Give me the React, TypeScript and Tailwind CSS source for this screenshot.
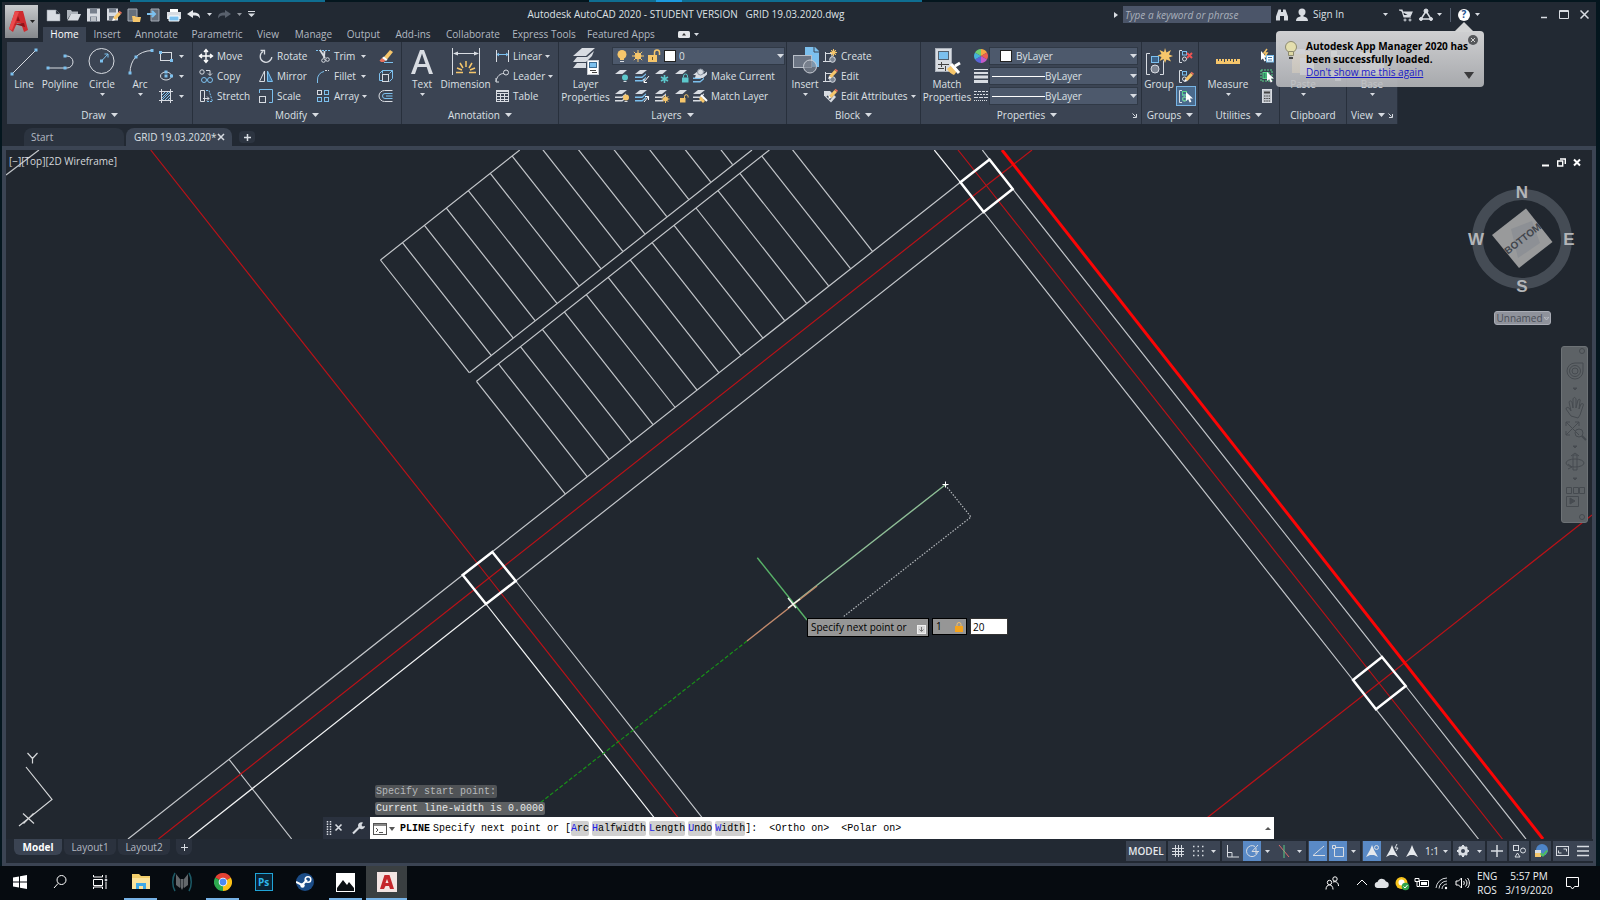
import { useState } from "react";
import type { ReactNode } from "react";

const BLUE = "#7cc0ee";
const GOLD = "#f6c66b";
const LIGHT = "#d8dce2";

/** svg wrapper, everything is drawn in px units */
function Icon({ w = 16, h = 16, children, className = "" }: { w?: number; h?: number; children: ReactNode; className?: string }) {
  return (
    <svg
      width={w}
      height={h}
      viewBox={`0 0 ${w} ${h}`}
      fill="none"
      stroke={LIGHT}
      strokeWidth={1}
      className={`shrink-0 ${className}`}
      aria-hidden="true"
    >
      {children}
    </svg>
  );
}

function Caret({ small = false }: { small?: boolean }) {
  return small ? (
    <Icon w={5} h={3}>
      <path d="M0 0h5L2.5 3z" fill={LIGHT} stroke="none" />
    </Icon>
  ) : (
    <Icon w={7} h={4}>
      <path d="M0 0h7L3.5 4z" fill={LIGHT} stroke="none" />
    </Icon>
  );
}

function Dot({ x, y }: { x: number; y: number }) {
  return <rect x={x - 1.5} y={y - 1.5} width={3} height={3} fill={BLUE} stroke="none" />;
}

/* ---------- shared icon parts ---------- */

const Pencil = () => (
  <g stroke="none">
    <path d="M7 11l5.500-6 2.500 2-5.500 6z" fill={GOLD} />
    <path d="M12.500 5l1-1.200 2.500 2-1 1.200z" fill="#e8705c" />
    <path d="M7 11l-.8 3 3.300-1z" fill="#fff" />
  </g>
);

const Sheets = ({ blue = false }: { blue?: boolean }) => (
  <g stroke="none">
    <path d="M6 2h7l-5 4H1z" fill={LIGHT} />
    <path d="M1 8.500h7l4-3.200v1.500L8.300 10H1z" fill={blue ? BLUE : LIGHT} />
    <path d="M1 12h7l4-3.200v1.500L8.300 13.500H1z" fill={blue ? BLUE : LIGHT} />
  </g>
);

const SmallSheet = () => <path d="M6 2h7l-4.500 4H1z" fill={LIGHT} stroke="none" />;

const Pointer = () => <path d="M8 4v9l2.200-1.800 1.500 3.300 1.700-.8-1.500-3.200H15z" fill="#fff" stroke="none" />;

const Sun = ({ x, y, r = 5 }: { x: number; y: number; r?: number }) => (
  <g stroke={GOLD}>
    <circle cx={x} cy={y} r={r * 0.5} fill={GOLD} />
    <path
      d={`M${x} ${y - r}v${r * 2}M${x - r} ${y}h${r * 2}M${x - r * 0.7} ${y - r * 0.7}l${r * 1.4} ${r * 1.4}M${x + r * 0.7} ${y - r * 0.7}l${-r * 1.4} ${r * 1.4}`}
    />
  </g>
);

/* ---------- ribbon tool pieces ---------- */

function BigTool({ label, w, icon, caret = true }: { label: string; w: string; icon: ReactNode; caret?: boolean }) {
  return (
    <button type="button" className={`${w} flex h-[60px] shrink-0 flex-col items-center`}>
      <Icon w={32} h={32}>
        {icon}
      </Icon>
      <span className="leading-[13px] whitespace-pre">{label}</span>
      {caret && (
        <span className="mt-0.5">
          <Caret small />
        </span>
      )}
    </button>
  );
}

function Tool({ label, icon, w = "", caret = false }: { label: string; icon: ReactNode; w?: string; caret?: boolean }) {
  return (
    <button type="button" className={`${w} flex h-5 shrink-0 items-center gap-[3px] whitespace-nowrap`}>
      <Icon>{icon}</Icon>
      <span className="flex-1 text-left">{label}</span>
      {caret && (
        <span className="pr-3">
          <Caret small />
        </span>
      )}
    </button>
  );
}

function IconTool({ label, icon, caret = false, active = false }: { label: string; icon: ReactNode; caret?: boolean; active?: boolean }) {
  return (
    <button
      type="button"
      aria-label={label}
      className={`flex h-5 min-w-5 items-center justify-center gap-[5px] ${active ? "border border-[#76b4e4] bg-[#4a6a8c]" : ""}`}
    >
      <Icon>{icon}</Icon>
      {caret && <Caret small />}
    </button>
  );
}

function Panel({ title, w, caret = true, launcher = false, children }: { title: string; w: string; caret?: boolean; launcher?: boolean; children: ReactNode }) {
  return (
    <section className={`${w} flex shrink-0 flex-col border-r border-[#28303c] bg-[#3b4453] pt-1`}>
      <div className="flex h-[60px]">{children}</div>
      <div className={`relative flex h-[18px] items-center justify-center gap-[5px] ${launcher ? "pr-2" : ""}`}>
        {title}
        {caret && <Caret />}
        {launcher && (
          <Icon w={5} h={5} className="absolute right-1">
            <path d="M.5.500l3 3M4.500 1v3.500H1" />
          </Icon>
        )}
      </div>
    </section>
  );
}

const SELECT = "min-w-0 flex-1 appearance-none bg-transparent outline-none";
const FIELD = "flex h-[18px] items-center border border-[#303946] bg-[#4d596c]";

function PropertySelect({ name, options, swatch = false }: { name: string; options: string[]; swatch?: boolean }) {
  return (
    <div className={`${FIELD} w-[149px]`}>
      {swatch ? (
        <span className="mr-1 ml-[10px] size-3 border border-[#222] bg-white" />
      ) : (
        <span className="ml-0.5 h-px w-[53px] bg-white" />
      )}
      <select aria-label={name} className={SELECT}>
        {options.map((o) => (
          <option key={o}>{o}</option>
        ))}
      </select>
      <Caret />
    </div>
  );
}

/* ---------- ribbon ---------- */

const TABS = [
  { name: "Home", w: "w-[43px]" },
  { name: "Insert", w: "w-[42px]" },
  { name: "Annotate", w: "w-[57px]" },
  { name: "Parametric", w: "w-16" },
  { name: "View", w: "w-[38px]" },
  { name: "Manage", w: "w-[53px]" },
  { name: "Output", w: "w-[47px]" },
  { name: "Add-ins", w: "w-[52px]" },
  { name: "Collaborate", w: "w-[68px]" },
  { name: "Express Tools", w: "w-[74px]" },
  { name: "Featured Apps", w: "w-20" },
];

function DrawPanel() {
  return (
    <Panel title="Draw" w="w-[186px]">
      <span className="w-[3px]" />
      <BigTool label="Line" w="w-7" caret={false} icon={<><path d="M4 28L28 4" /><Dot x={4} y={28} /><Dot x={28} y={4} /></>} />
      <BigTool
        label="Polyline"
        w="w-11"
        caret={false}
        icon={<><path d="M4 22h19a6 6 0 0 0 0-12h-2" /><Dot x={4} y={22} /><Dot x={21} y={22} /><Dot x={21} y={10} /></>}
      />
      <BigTool
        label="Circle"
        w="w-10"
        icon={<><circle cx={15.5} cy={15} r={12.5} /><path d="M15.500 15L22 8M18.500 8H22v3.500" stroke={BLUE} /><Dot x={15.5} y={15} /></>}
      />
      <BigTool
        label="Arc"
        w="w-9"
        icon={<><path d="M6 27C6 14 14 5 28 4.500" /><Dot x={6} y={27} /><Dot x={12} y={11} /><Dot x={28} y={4.5} /></>}
      />
      <div>
        <IconTool label="Rectangle" caret icon={<><rect x={2.5} y={4.5} width={11} height={8} /><Dot x={2.5} y={4.5} /><Dot x={13.5} y={12.5} /></>} />
        <IconTool label="Ellipse" caret icon={<><ellipse cx={8} cy={8} rx={5.5} ry={4} /><Dot x={8} y={8} /><Dot x={13.5} y={8} /><Dot x={8} y={4} /></>} />
        <IconTool
          label="Hatch"
          caret
          icon={
            <>
              <path d="M3.500 1v14M12.500 1v14M1 3.500h14M1 12.500h14" />
              <path d="M4 7l3-3M4 10l6-6M4 12l8-8M7 12l5-5M10 12l2-2" stroke={BLUE} />
            </>
          }
        />
      </div>
    </Panel>
  );
}

function ModifyPanel() {
  return (
    <Panel title="Modify" w="w-[209px]">
      <div className="ml-[5px] w-[60px] shrink-0">
        <Tool label="Move" icon={<path d="M8 2v12M2 8h12M6 4l2-2.500L10 4M6 12l2 2.500 2-2.500M4 6L1.500 8 4 10M12 6l2.500 2L12 10" strokeWidth={1.4} stroke="#fff" />} />
        <Tool
          label="Copy"
          icon={<><circle cx={4} cy={4} r={2.2} /><path d="M8 2.500h4V7M10 5.500l2 2 2-2" /><g stroke={BLUE}><circle cx={6} cy={12} r={2.5} /><circle cx={12} cy={12} r={2.5} /></g></>}
        />
        <Tool label="Stretch" icon={<><path d="M2.500 2.500h4v11h-4zM5 10.500h6M9 8.500l2 2-2 2" /><path d="M8 2.500h3l3.500 11H8" stroke={BLUE} strokeDasharray="2 1" /></>} />
      </div>
      <div className="w-[57px] shrink-0">
        <Tool label="Rotate" icon={<><path d="M5 3.500A5.800 5.800 0 1 0 13.800 9" strokeWidth={1.3} /><path d="M2.500 2.500h4v4" strokeWidth={1.3} /></>} />
        <Tool label="Mirror" icon={<><path d="M6.500 3v10.500h-5z" /><path d="M9.500 3v10.500h5z" fill="#3e78a8" stroke={BLUE} /></>} />
        <Tool label="Scale" icon={<><path d="M1.500 5V1.500h13v13H11" stroke={BLUE} /><rect x={1.500} y={8.500} width={6} height={6} /></>} />
      </div>
      <div className="w-[61px] shrink-0">
        <Tool w="w-[63px]" caret label="Trim" icon={<><path d="M1 2.500h14" stroke={BLUE} strokeDasharray="2 1" /><path d="M5 2l5 8M9.500 3L9 10" strokeWidth={1.8} /><circle cx={8.500} cy={12.500} r={1.800} /><circle cx={12.500} cy={11.500} r={1.800} /></>} />
        <Tool w="w-[63px]" caret label="Fillet" icon={<><path d="M2.500 15v-3A8 8 0 0 1 9 3.500" stroke={BLUE} /><path d="M10 2.500h4" strokeDasharray="2 1" /></>} />
        <Tool
          w="w-[63px]"
          caret
          label="Array"
          icon={<><rect x={2.500} y={2.500} width={4} height={4} /><g stroke={BLUE}><rect x={9.500} y={2.500} width={4} height={4} /><rect x={2.500} y={9.500} width={4} height={4} /><rect x={9.500} y={9.500} width={4} height={4} /></g></>}
        />
      </div>
      <div>
        <IconTool label="Erase" icon={<g stroke="none"><path d="M6 9l6-7 3 2-6 7.500z" fill={GOLD} /><path d="M4 10l-2.500 2.500 1.500 1.500h3l1.500-1.500z" fill="#e8705c" /><path d="M6 8.500l3.500 3L8 13l-4-3z" fill="#fff" /><path d="M6 14h9v1H6z" fill={BLUE} /></g>} />
        <IconTool label="Explode" icon={<><path d="M1.500 5.500l3-3h10v8l-3 3" stroke={BLUE} /><path d="M4.500 2.500v3M14.500 2.500l-3 3" stroke={BLUE} /><rect x={4.500} y={6.500} width={6} height={7} /><path d="M1.500 5.500v7h3" stroke={BLUE} /></>} />
        <IconTool label="Offset" icon={<><path d="M14.500 2.500h-8a5 5 0 0 0 0 11h8" /><path d="M14.500 5.500H7a2.500 2.500 0 0 0 0 5h7.500M14.500 8H8" stroke={BLUE} /></>} />
      </div>
    </Panel>
  );
}

function AnnotationPanel() {
  return (
    <Panel title="Annotation" w="w-[157px]">
      <span className="w-0.5" />
      <BigTool label="Text" w="w-9" icon={<path d="M5 28L14 4h4l9 24h-4l-2.300-7H11.500L9 28zM12.500 18h7L16 7.500z" fill={LIGHT} stroke="none" />} />
      <BigTool
        label="Dimension"
        w="w-[51px]"
        caret={false}
        icon={
          <>
            <path d="M2.500 2v27M29.500 2v27M4 7.500h24" />
            <path d="M3 7.500l5-2v4zM29 7.500l-5-2v4z" fill={LIGHT} stroke="none" />
            <path d="M16 15v6M10 17l3 5M22 17l-3 5M7 22l5 2M25 22l-5 2M6 26.500h7M26 26.500h-7" stroke={GOLD} strokeWidth={1.5} />
          </>
        }
      />
      <div className="ml-[3px] w-[62px]">
        <Tool w="w-[62px]" caret label="Linear" icon={<><path d="M2.500 2v12M14.500 2v12" /><path d="M3 6.500h11M5 5L3 6.500 5 8M12 5l2 1.500L12 8" stroke={BLUE} /></>} />
        <Tool w="w-16" caret label="Leader" icon={<><path d="M2 13.500C3 8 6 5.500 10 5.500M2 10v4h3" /><circle cx={12} cy={4.5} r={2.5} /></>} />
        <Tool label="Table" icon={<><rect x={2.500} y={2.500} width={12} height={11} /><path d="M2 5.500h13M2 8.500h13M2 11.500h13M6.500 5v9M10.500 5v9M2 3.500h13" /></>} />
      </div>
    </Panel>
  );
}

function LayersPanel() {
  return (
    <Panel title="Layers" w="w-[228px]">
      <BigTool
        label={"Layer\nProperties"}
        w="w-[53px]"
        caret={false}
        icon={
          <>
            <g stroke="none" fill={LIGHT}>
              <path d="M12 2h13l-9 8H3z" />
              <path d="M7 11h10l7-6-2 5-6 6H3z" />
              <path d="M7 17h9v5H3z" />
            </g>
            <rect x={17.500} y={14.500} width={11} height={14} fill="#fff" stroke="#c3c8d0" />
            <rect x={19.500} y={16.500} width={7} height={5} fill={BLUE} stroke="#3d6c93" />
            <path d="M20 24.500h6M22 26.500h5" stroke="#444" />
          </>
        }
      />
      <div className="flex flex-col">
        <div className="flex h-5 items-center">
          <div className={`${FIELD} w-[173px]`}>
            <Icon className="ml-px">
              <circle cx={8} cy={6.5} r={4.5} fill={GOLD} stroke="none" />
              <path d="M6 10h4v2H6z" fill={GOLD} stroke="none" />
              <path d="M6 13.500h4" />
            </Icon>
            <Icon><Sun x={8} y={8} r={6} /></Icon>
            <Icon>
              <rect x={2} y={7} width={9} height={7} fill={GOLD} stroke="none" />
              <path d="M8.500 7V4.500a2.500 2.500 0 0 1 5 0V7" stroke={GOLD} strokeWidth={1.5} />
              <path d="M6.500 9v3" stroke="#6b5520" />
            </Icon>
            <span className="mr-[3px] ml-0.5 size-3 border border-[#222] bg-white" />
            <select aria-label="Layer" className={SELECT}>
              <option>0</option>
            </select>
            <Caret />
          </div>
        </div>
        <div className="flex">
          <IconTool label="Off" icon={<><SmallSheet /><circle cx={11} cy={9.500} r={3} fill="#5cc8cc" stroke="none" /><path d="M9.500 13.500h3" /></>} />
          <IconTool label="Isolate" icon={<><Sheets blue /><path d="M15 8l-5 6M10 11v3.500h3" stroke="#fff" /></>} />
          <IconTool label="Freeze" icon={<><SmallSheet /><path d="M10.500 7v8M7 9l7 4M14 9l-7 4" stroke="#5cc8cc" strokeWidth={1.600} /></>} />
          <IconTool label="Lock" icon={<><SmallSheet /><rect x={8} y={9.500} width={6.500} height={5} fill="#5cc8cc" stroke="none" /><path d="M9.500 9.500V8a2 2 0 0 1 4 0v1.500" stroke="#5cc8cc" /></>} />
          <Tool label="Make Current" icon={<><g transform="translate(0 1)"><Sheets blue /></g><path d="M4 6h8l3-2.500v3L11 10H3z" fill={LIGHT} stroke="none" /><circle cx={8.500} cy={4} r={3} fill={LIGHT} stroke="#8a93a0" /></>} />
        </div>
        <div className="flex">
          <IconTool label="Turn all on" icon={<><Sheets /><circle cx={12} cy={9.500} r={3} fill={GOLD} stroke="none" /><path d="M10.500 13.500h3" /></>} />
          <IconTool label="Unisolate" icon={<><Sheets blue /><path d="M10 14l4.500-5.500M11 8.500h3.500V12" stroke="#fff" /></>} />
          <IconTool label="Thaw" icon={<><Sheets /><Sun x={11.500} y={11} r={4} /></>} />
          <IconTool label="Unlock" icon={<><SmallSheet /><rect x={6} y={10} width={5.500} height={4.500} fill={GOLD} stroke="none" /><path d="M10.500 10V8.500a1.800 1.800 0 0 1 3.600 0v1" stroke={GOLD} /></>} />
          <Tool label="Match Layer" icon={<><Sheets /><path d="M9 8l4 5-2 2-4-4z" fill={GOLD} stroke="none" /><path d="M9 7l6 6" stroke="#fff" strokeWidth={2} /></>} />
        </div>
      </div>
    </Panel>
  );
}

const BlockBase = () => (
  <>
    <path d="M3.500 4v9.500M1 13.500h8M3 5.500h7v5" />
    <circle cx={10.500} cy={11.500} r={2.800} fill="#7b8492" />
  </>
);

function BlockPanel() {
  return (
    <Panel title="Block" w="w-[134px]">
      <span className="w-px" />
      <BigTool
        label="Insert"
        w="w-[34px]"
        icon={
          <>
            <path d="M16 1h10l4 4v16H16z" fill={BLUE} stroke="none" />
            <path d="M25 1v5h5" stroke="#3b4453" />
            <rect x={4.500} y={9.500} width={18} height={12} fill="#6c7584" stroke="#b9bfc8" />
            <circle cx={21} cy={20.500} r={6.500} fill="#7d8592" fillOpacity={0.7} stroke="#c9ced6" />
          </>
        }
      />
      <div>
        <Tool label="Create" icon={<><BlockBase /><Sun x={11.500} y={4.500} r={3.500} /></>} />
        <Tool label="Edit" icon={<><BlockBase /><g transform="translate(0 -3)"><Pencil /></g></>} />
        <Tool w="w-[95px]" caret label="Edit Attributes" icon={<><path d="M2 3h6l6 6-5 5.500-7-7z" fill={LIGHT} stroke="none" /><path d="M5 8l3 3 3-4" stroke="#3b4453" strokeWidth={1.500} /><g transform="translate(0 -3)"><Pencil /></g></>} />
      </div>
    </Panel>
  );
}

function PropertiesPanel() {
  return (
    <Panel title="Properties" w="w-[221px]" launcher>
      <BigTool
        label={"Match\nProperties"}
        w="w-[52px]"
        caret={false}
        icon={
          <>
            <rect x={4.500} y={2.500} width={16} height={23} fill={LIGHT} stroke="#aab0ba" />
            <rect x={7.500} y={5.500} width={10} height={8} fill={BLUE} stroke="#54616f" />
            <path d="M7 18.500h11M7 22.500h6M10.500 16v5M14.500 20v5" stroke="#444" />
            <path d="M16 23l6-5 5 6-4 5c-3-1-5-3-7-6z" fill={GOLD} stroke="none" />
            <path d="M20 18l8 9M24 20l5-3" stroke="#fff" strokeWidth={3} />
          </>
        }
      />
      <div className="flex w-4 flex-col">
        <Icon h={20}>
          <g stroke="none" transform="translate(8 10)">
            <path d="M0 0V-7A7 7 0 0 1 6 -3.500z" fill="#f5a742" />
            <path d="M0 0L6-3.500A7 7 0 0 1 6 3.500z" fill="#ec5f52" />
            <path d="M0 0L6 3.500A7 7 0 0 1 0 7z" fill="#c35bc9" />
            <path d="M0 0V7A7 7 0 0 1-6 3.500z" fill="#5a63d8" />
            <path d="M0 0L-6 3.500A7 7 0 0 1-6-3.500z" fill="#45b3d8" />
            <path d="M0 0L-6-3.500A7 7 0 0 1 0-7z" fill="#6fcf72" />
          </g>
        </Icon>
        <Icon h={20}>
          <path d="M1 3.500h14" />
          <path d="M1 7h14" strokeWidth={2} />
          <path d="M1 11h14M1 15.500h14" strokeWidth={3} />
        </Icon>
        <Icon h={20}>
          <path d="M1 5.500h14" strokeDasharray="3 1" />
          <path d="M1 8.500h14" strokeDasharray="2 1" />
          <path d="M1 11.500h14" strokeDasharray="4 1" />
          <path d="M1 14.500h14" strokeDasharray="1 1" />
        </Icon>
      </div>
      <div className="flex flex-col justify-around">
        <PropertySelect name="Object color" options={["ByLayer", "ByBlock"]} swatch />
        <PropertySelect name="Lineweight" options={["ByLayer", "ByBlock"]} />
        <PropertySelect name="Linetype" options={["ByLayer", "ByBlock"]} />
      </div>
    </Panel>
  );
}

const Bracket = () => (
  <>
    <path d="M4 2.500H1.500v12H4M11 2.500" />
    <rect x={4.500} y={3.500} width={4} height={3.500} stroke={BLUE} />
    <circle cx={6.500} cy={11} r={2} />
  </>
);

function GroupsPanel() {
  return (
    <Panel title="Groups" w="w-[57px]">
      <BigTool
        label="Group"
        w="w-[34px]"
        caret={false}
        icon={
          <>
            <path d="M7 7.500H3.500v21H7M17 28.500h3.500v-14" />
            <rect x={8.500} y={10.500} width={7} height={6} fill="#3b6288" stroke={BLUE} />
            <circle cx={12} cy={23} r={4} fill="#7d8592" />
            <path d="M22 2l1.500 4.500L28 4l-2 4.500 4 1.500-4 1.500 2 4-4.500-2L22 17l-1.500-4-4 2 2-4-4-1.500 4-1.500-2-4 4.500 2z" fill={GOLD} stroke="none" />
          </>
        }
      />
      <div>
        <IconTool label="Ungroup" icon={<><Bracket /><path d="M9 5l5 5M14 5l-5 5" stroke="#ee5252" strokeWidth={2} /></>} />
        <IconTool label="Group edit" icon={<><Bracket /><Pencil /></>} />
        <IconTool label="Group selection" active icon={<><Bracket /><rect x={4.500} y={3.500} width={4} height={3.500} stroke="#5bd68a" /><circle cx={6.500} cy={11} r={2} stroke="#5bd68a" /><Pointer /></>} />
      </div>
    </Panel>
  );
}

function Ribbon() {
  return (
    <div className="flex overflow-hidden pl-[5px]">
      <DrawPanel />
      <ModifyPanel />
      <AnnotationPanel />
      <LayersPanel />
      <BlockPanel />
      <PropertiesPanel />
      <GroupsPanel />
      <Panel title="Utilities" w="w-[81px]">
        <BigTool
          label="Measure"
          w="w-[58px]"
          icon={
            <g stroke="none">
              <path d="M4 13h24v5H4z" fill={GOLD} />
              <path d="M6 13h1v2H6zM9 13h1v2H9zM12 13h1v3h-1zM15 13h1v2h-1zM18 13h1v2h-1zM21 13h1v3h-1zM24 13h1v2h-1z" fill="#3b4453" />
            </g>
          }
        />
        <div>
          <IconTool label="Quick select" icon={<><path d="M2 3v9l2-1.500 1.500 3 1.500-1-1.500-3H8z" fill="#fff" stroke="none" /><path d="M8 1L5 5h3L6 8" stroke={GOLD} strokeWidth={1.500} /><rect x={7.500} y={7.500} width={7} height={6.500} fill="#fff" stroke={BLUE} /><path d="M9 9.500h4M9 12h4" stroke="#3e78a8" /></>} />
          <IconTool label="Select all" icon={<><rect x={2} y={2} width={11} height={11} stroke="#5bd68a" strokeDasharray="2 1" /><rect x={4} y={4.500} width={5} height={6} fill="#2f8a63" stroke="#5bd68a" /><path d="M7 10V5h4" stroke="#5bd68a" /><Pointer /></>} />
          <IconTool label="Quick calculator" icon={<><rect x={3.500} y={1.500} width={9} height={13} fill="#bfc4cb" /><path d="M5 4.500h6" stroke="#444" strokeWidth={2} /><path d="M5 8h6M5 10.500h6M5 13h6" stroke="#444" strokeDasharray="1.500 .8" /></>} />
        </div>
      </Panel>
      <Panel title="Clipboard" w="w-[67px]" caret={false}>
        <BigTool
          label="Paste"
          w="w-[46px]"
          icon={<g stroke="none"><path d="M5 5h18v22H5z" fill={GOLD} /><path d="M9 3h9v5H9z" fill={LIGHT} /><path d="M13 12h14v17H13z" fill="#fff" /></g>}
        />
        <div>
          <IconTool label="Cut" icon={<path d="M3 3h6v4h4v6H7V9H3z" fill={LIGHT} stroke="none" />} />
          <IconTool label="Copy clip" icon={<path d="M3 3h6v4h4v6H7V9H3z" fill={LIGHT} stroke="none" />} />
        </div>
      </Panel>
      <Panel title="View" w="w-[51px]" launcher>
        <BigTool label="Base" w="w-[50px]" icon={<path d="M4 6h12v9h12v13H4z" fill={LIGHT} stroke="none" />} />
      </Panel>
    </div>
  );
}

/* ---------- title bar ---------- */

function QuickAccess() {
  const btn = "flex w-5 justify-center";
  return (
    <div className="flex items-center pl-px">
      <button type="button" aria-label="New" className={btn}><Icon><path d="M1 3h9l4 4v7H1zM10 3v4h4" fill={LIGHT} stroke="#8f969f" strokeWidth={0.5} /></Icon></button>
      <button type="button" aria-label="Open" className={btn}><Icon><path d="M1 13V3h4l1 1.500h6V7H5z" fill="#aeb4bc" stroke="none" /><path d="M5 7h10l-3 6.500H1.500z" fill={LIGHT} stroke="none" /></Icon></button>
      <button type="button" aria-label="Save" className={btn}><Icon><path d="M1 1.500h13v13H1z" fill={LIGHT} stroke="none" /><path d="M4 1.500h7v5H4zM4 9.500h7v5H4z" fill="#77808d" stroke="none" /><path d="M5 11h5M5 13h5" stroke="#fff" /></Icon></button>
      <button type="button" aria-label="Save as" className={btn}><Icon><path d="M1 1.500h11v12H1z" fill={LIGHT} stroke="none" /><path d="M3 1.500h7v4H3zM3 9h5v4H3z" fill="#77808d" stroke="none" /><Pencil /></Icon></button>
      <button type="button" aria-label="Open from mobile" className={btn}><Icon><path d="M2 2h9v12H2z" fill="#666f7b" stroke="#a4abb5" /><path d="M6 9h3l1 1h5l-1 5H7z" fill={GOLD} stroke="none" /></Icon></button>
      <button type="button" aria-label="Save to mobile" className={btn}><Icon><path d="M5 2h8v12H5z" fill="#666f7b" stroke="#a4abb5" /><path d="M1 7h7M6 4l3 3-3 3" stroke={BLUE} strokeWidth={2} /></Icon></button>
      <button type="button" aria-label="Plot" className={btn}><Icon><path d="M4 2h8v3H4z" fill="#fff" stroke="none" /><path d="M1 5h14v7H1z" fill={LIGHT} stroke="none" /><path d="M3 9h10v5H3z" fill={BLUE} stroke="#fff" /></Icon></button>
      <button type="button" aria-label="Undo" className={btn}><Icon><path d="M1 7l6-4v2.500c5 0 7 1.500 7 6-1.500-2.500-3-3-7-3V11z" fill="#e6e9ed" stroke="none" /></Icon></button>
      <span className="flex w-[10px] justify-center"><Caret small /></span>
      <button type="button" aria-label="Redo" className={btn}><Icon><path d="M15 7L9 3v2.500c-5 0-7 1.500-7 6 1.500-2.500 3-3 7-3V11z" fill="#59616d" stroke="none" /></Icon></button>
      <span className="flex w-[10px] justify-center opacity-60"><Caret small /></span>
      <button type="button" aria-label="Customize" className="flex w-[14px] justify-center"><Icon w={7} h={7}><path d="M0 .5h7" /><path d="M0 2.500h7L3.500 6z" fill={LIGHT} stroke="none" /></Icon></button>
    </div>
  );
}

function TitleRight() {
  return (
    <div className="flex items-center">
      <Icon w={4} h={6}><path d="M0 0l4 3-4 3z" fill={LIGHT} stroke="none" /></Icon>
      <input
        aria-label="Search"
        placeholder="Type a keyword or phrase"
        className="ml-[5px] h-[17px] w-[148px] bg-[#4b5569] px-0.5 text-[10px] italic outline-none placeholder:text-[#a9b0bb]"
      />
      <button type="button" aria-label="Find" className="mr-0.5 ml-px flex w-5 justify-center"><Icon><path d="M4.500 2.500h2.500V5h2V2.500h2.500l2.500 7v4h-4V9H6v4.500H2v-4z" fill={LIGHT} stroke="none" /></Icon></button>
      <button type="button" className="flex w-[94px] items-center gap-[3px]">
        <Icon><circle cx={8} cy={5} r={3.500} fill={LIGHT} stroke="none" /><path d="M2 14c0-3 2-4 4.500-4.500V8h3v1.500C12 10 14 11 14 14z" fill={LIGHT} stroke="none" /></Icon>
        <span className="flex-1 text-left">Sign In</span>
        <Caret small />
      </button>
      <button type="button" aria-label="App store" className="ml-2 flex w-5 justify-center"><Icon><path d="M1 3h3l2 7h7M4.500 5H14l-1.500 3.500H5.500z" fill={LIGHT} strokeWidth={1.200} /><circle cx={7} cy={13} r={1} /><circle cx={12} cy={13} r={1} /></Icon></button>
      <button type="button" aria-label="Autodesk 360" className="ml-0.5 flex items-center gap-[3px]"><Icon><path d="M8 4l5 8H3z" strokeWidth={1.500} /><circle cx={8} cy={4} r={2} fill={LIGHT} /><circle cx={3} cy={12} r={1.500} fill={LIGHT} /><circle cx={13} cy={12} r={1.500} fill={LIGHT} /></Icon><Caret small /></button>
      <span className="ml-2 h-[14px] w-px bg-[#566070]" />
      <button type="button" aria-label="Help" className="ml-[7px] flex items-center gap-[5px]">
        <span className="flex size-3 items-center justify-center rounded-full bg-white text-[10px] font-bold text-[#24508f]">?</span>
        <Caret small />
      </button>
      <div className="ml-[54px] flex items-center">
        <button type="button" aria-label="Minimize" className="flex w-5 justify-center"><Icon w={9} h={9}><path d="M1 7.500h6" strokeWidth={1.500} /></Icon></button>
        <button type="button" aria-label="Maximize" className="flex w-5 justify-center"><Icon w={10} h={9}><path d="M.5.500h9v8h-9zM0 1.500h10" /></Icon></button>
        <button type="button" aria-label="Close" className="flex w-5 justify-center"><Icon w={9} h={9}><path d="M.5.500l8 8M8.500.500l-8 8" strokeWidth={1.500} /></Icon></button>
      </div>
      <span className="w-0.5" />
    </div>
  );
}

function Header() {
  const [tab, setTab] = useState("Home");

  return (
    <header className="flex">
      <button type="button" aria-label="Application menu" className="mt-[3px] -mb-px ml-[3px] flex h-[33px] w-[33px] shrink-0 items-center justify-center bg-linear-to-b from-[#c9cbce] to-[#85888c]">
        <Icon w={22} h={26}>
          <path d="M7 2h8l5 19-4 2-3-9h-4l-4 9-4-3z" fill="#cf2a2e" stroke="none" />
          <path d="M10 7l2 5H8.500zM6 15l10-1 1 4z" fill="#8e1418" stroke="none" />
          <path d="M7 2l4 1-7 18-3-1z" fill="#ea4b4d" stroke="none" />
        </Icon>
        <Icon w={5} h={3}><path d="M0 0h5L2.500 3z" fill="#222" stroke="none" /></Icon>
      </button>
      <div className="ml-[5px] flex-1">
        <div className="flex h-[25px] items-center">
          <QuickAccess />
          <h1 className="flex-1 text-center whitespace-pre text-[#dfe2e6]">Autodesk AutoCAD 2020 - STUDENT VERSION   GRID 19.03.2020.dwg</h1>
          <TitleRight />
        </div>
        <nav className="flex h-[15px] items-center">
          {TABS.map((t) => (
            <button
              key={t.name}
              type="button"
              onClick={() => setTab(t.name)}
              className={`${t.w} flex h-full items-center justify-center whitespace-nowrap ${t.name === tab ? "bg-[#3b4453] text-white" : "text-[#b3b9c2]"}`}
            >
              {t.name}
            </button>
          ))}
          <button type="button" aria-label="Minimize ribbon" className="ml-[17px] flex items-center gap-1">
            <Icon w={12} h={7}><rect width={12} height={7} rx={1.500} fill="#e4e6ea" stroke="none" /><path d="M4 4.500h4L6 2z" fill="#333" stroke="none" /></Icon>
            <Caret small />
          </button>
        </nav>
      </div>
    </header>
  );
}

/* ---------- drawing ---------- */

const GREY = "#c3c6ca";
const RED = "#b81218";

// stair treads: one step along the run and the tread vector across it
const STEP = { x: 21.95, y: -17.33 };
const TREAD = { x: 88.7, y: 112.6 };

function Stairs({ x, y, count }: { x: number; y: number; count: number }) {
  return (
    <>
      {Array.from({ length: count }, (_, i) => {
        const sx = x + i * STEP.x;
        const sy = y + i * STEP.y;
        return <line key={i} x1={sx} y1={sy} x2={sx + TREAD.x} y2={sy + TREAD.y} />;
      })}
    </>
  );
}

function Drawing() {
  return (
    <svg className="absolute inset-0 h-full w-full" fill="none" role="img" aria-label="Drawing">
      <g transform="translate(-6 -150)">
        <g stroke={GREY} strokeWidth={1.2}>
          <Stairs x={380.5} y={260} count={13} />
          <Stairs x={476.5} y={381.3} count={15} />
          <path d="M380.500 260L519.800 150M469.400 372.700L752 150M476.500 381.300L769.400 150" />
          <path d="M960.400 182.300L492.300 551.700M462.700 575L128 839M983.700 212L515.700 581" />
          <path d="M515.700 581L719 839M229 759.300L291.700 839" />
          <path d="M983.700 212L1353 680M1376 709.300L1478.500 839M982.300 150l7.200 9.300M1012.700 189L1382 656.700M1405.700 686L1526 839" />
          <path d="M39 150L6 175" />
        </g>
        <g stroke="#f2f3f4" strokeWidth={1.2}>
          <path d="M486 604L188.400 839M486 604L671 839M934.300 150l26.100 32.300" />
        </g>
        <g stroke={RED} strokeWidth={1.2}>
          <path d="M1032 150L986.300 185.500L489 578L158.400 839" />
          <path d="M150.700 150L489 578L695 839" />
          <path d="M958 150L986.300 185.500L1379 683L1502.500 839" />
          <path d="M1592 515L1379 683L1180 839" />
        </g>
        <path d="M1002 150L1543 839" stroke="#fb0505" strokeWidth={3} />
        <g stroke="#fff" strokeWidth={2.5}>
          <path d="M492.300 552l23.400 29L486 604l-23.300-29z" />
          <path d="M1382 657l23.700 29-29.700 23.300L1353 680z" />
          <path d="M989.500 159.500l23.200 29.500-29 23-23.300-29.700z" />
        </g>
        {/* polyline in progress */}
        <path d="M793 604L945 485" stroke="#8fbf97" strokeWidth={1.4} />
        <path d="M747 641L540 803" stroke="#189018" strokeWidth={1.2} strokeDasharray="4 2" />
        <path d="M945.300 485L971 517L843 617" stroke="#b4b8bc" strokeWidth={1.2} strokeDasharray="1.500 1.500" />
        <path d="M757.300 557.700L807 620" stroke="#58b268" strokeWidth={1.4} />
        <path d="M747 641L817 586" stroke="#c38a6c" strokeWidth={1.4} />
        <path d="M788 598l8 10M788 608l12-9" stroke="#f0f4ee" strokeWidth={1.4} />
        <path d="M945.500 481.500v6M942.500 484.500h6" stroke="#fff" />
        {/* UCS icon */}
        <path d="M26 767L52 799.500L19 826M27.500 753l5 5.500 5-5.500M32.500 758v5.500M23 813.500l11 10M33.500 813.500l-10 10" stroke="#d5d7d9" strokeWidth={1.2} />
      </g>
    </svg>
  );
}

function ViewCube() {
  return (
    <div className="absolute top-[32px] right-[9px] flex w-[122px] flex-col items-center">
      <svg width={122} height={118} fill="none" role="img" aria-label="View cube">
        <circle cx={61} cy={57} r={44.500} stroke="#454c55" strokeWidth={11} />
        <path d="M65 26.500L91.500 60 58 86 31 53z" fill="#999a9b" />
        <path d="M50 47l21-8 8 22-22 15z" fill="#8d9095" />
        <text x={62} y={60} textAnchor="middle" transform="rotate(-38 62 57)" fontFamily="Liberation Sans, sans-serif" fontSize={10} fontWeight={700} fill="#41454c">BOTTOM</text>
        <g fontFamily="Liberation Sans, sans-serif" fontSize={17} fontWeight={700} fill="#b3b5b8" textAnchor="middle">
          <text x={61} y={16}>N</text>
          <text x={61} y={110}>S</text>
          <text x={15} y={63}>W</text>
          <text x={108} y={63}>E</text>
        </g>
      </svg>
      <button type="button" className="mt-[11px] flex h-[14px] w-[57px] items-center justify-between rounded-[3px] border border-[#a9acb5] bg-[#8f929b] pr-px pl-0.5 text-[#4a4e57]">
        Unnamed
        <Icon w={5} h={3}><path d="M0 0h5L2.500 3z" stroke="#b9bbc4" /></Icon>
      </button>
    </div>
  );
}

function NavBar() {
  return (
    <div className="absolute top-[196px] right-[4px] w-[27px] rounded-[3px] border border-[#6d7276] bg-[#5d6266]">
      <svg width={25} height={175} fill="none" stroke="#464b50" aria-label="Navigation bar" role="img">
        <circle cx={20} cy={4} r={2.500} />
        <path d="M5 24a8 8 0 0 1 8-8h8v8a8 8 0 0 1-16 0z" />
        <circle cx={13} cy={24} r={5.500} />
        <circle cx={13} cy={24} r={3} />
        <path d="M11 41h4l-2 2zM11 99h4l-2 2zM11 131h4l-2 2z" fill="#464b50" />
        <path d="M9 69l-5-7c0-2 2-2 3-1l2 3-2-9c1-2 2-1 3 0l1 6V52c1-2 2-2 3 0v9l2-8c1-1 3-1 2 1l-1 8 2-5c2-1 3 0 2 2l-3 9-2 3z" />
        <path d="M4 75l13 13M17 75L4 88M4 79v-4h4M13 75h4v4M4 84v4h4" />
        <circle cx={17} cy={86} r={4} />
        <path d="M20 89l4 4" strokeWidth={2} />
        <ellipse cx={13} cy={116} rx={9} ry={4} />
        <path d="M11 108h4v15h-4zM9 109l4-3 4 3M6 117l4 3-4 2" />
        <path d="M4.500 140.500h5v6h-5zM11.500 140.500h5v6h-5zM17.500 140.500h5v6h-5zM4.500 149.500h12v10h-12z" />
        <path d="M8 151l5 3-5 3z" fill="#464b50" />
        <circle cx={20} cy={170} r={2.500} />
      </svg>
    </div>
  );
}

function DynamicInput() {
  return (
    <div className="absolute top-[468px] left-[801px] flex items-start gap-[3px] text-black">
      <label htmlFor="dyn-distance" className="flex h-[19px] w-[122px] items-center justify-between border border-black bg-[#969696] pr-0.5 pl-[3px] whitespace-nowrap">
        Specify next point or
        <Icon w={9} h={9} className="mt-[3px]"><rect x={0.500} y={0.500} width={8} height={8} fill="#d8d8d8" stroke="#f0f0f0" /><path d="M4.500 2v4M2.500 4.500l2 2 2-2" stroke="#777" /></Icon>
      </label>
      <div className="flex h-[17px] w-[35px] items-center justify-between border border-black bg-[#969696] px-[3px]">
        1
        <Icon w={8} h={10}><rect y={4} width={8} height={6} fill="#f5a31c" stroke="none" /><path d="M2 4V2.500a2 2 0 0 1 4 0V4" stroke="#f0c070" /></Icon>
      </div>
      <input id="dyn-distance" defaultValue="20" className="h-[17px] w-[38px] border border-[#333] bg-white px-0.5 outline-none" />
    </div>
  );
}

const KEYWORDS = ["Arc", "Halfwidth", "Length", "Undo", "Width"];

function CommandLine() {
  return (
    <div className="absolute right-[318px] bottom-0 left-[317px] font-['Liberation_Mono',monospace]">
      <div className="ml-[52px] flex flex-col items-start gap-1 pb-0.5 leading-[13px]">
        <p className="rounded-xs bg-[#505356] px-px text-[#b6b9bc]">Specify start point:</p>
        <p className="rounded-xs bg-[#5e6163] px-px text-[#e8e9ea]">Current line-width is 0.0000</p>
      </div>
      <div className="flex h-[22px] items-center bg-[#2a313e]">
        <Icon w={10} h={16}><path d="M4.500 1v14M7.500 1v14" strokeWidth={1.500} strokeDasharray="1.500 1" /></Icon>
        <button type="button" aria-label="Close command line" className="ml-px"><Icon w={10} h={10}><path d="M1.500 1.500l6 6M7.500 1.500l-6 6" strokeWidth={1.600} /></Icon></button>
        <button type="button" aria-label="Customize" className="ml-[7px]"><Icon><path d="M2 13.500l6-6" strokeWidth={2.200} /><path d="M12 2.500a3.500 3.500 0 1 0 2 3.500l-2.500.5-1-1.500z" fill={LIGHT} stroke="none" /></Icon></button>
        <div className="ml-[3px] flex h-full flex-1 items-center bg-white pt-px pl-[3px] text-black">
          <Icon w={14} h={12}><rect x={0.500} y={0.500} width={13} height={11} stroke="#555" /><path d="M1 2h12" stroke="#888" strokeWidth={2} /><path d="M3 5l2 2-2 2M6 9.500h4" stroke="#555" /></Icon>
          <Icon w={6} h={4} className="ml-0.5"><path d="M0 0h6L3 4z" fill="#555" stroke="none" /></Icon>
          <label htmlFor="command" className="ml-[5px] flex items-center whitespace-pre">
            <b>PLINE</b>
            <span className="ml-[3px]">Specify next point or [</span>
            <span className="flex gap-[3px]">
              {KEYWORDS.map((k) => (
                <span key={k} className="rounded-xs bg-[#d0d0d0] leading-[15px]">
                  <span className="text-[#2020e8]">{k[0]}</span>
                  {k.slice(1)}
                </span>
              ))}
            </span>
            {"]:  <Ortho on>  <Polar on>"}
          </label>
          <input id="command" className="min-w-0 flex-1 bg-transparent px-1 outline-none" />
          <Icon w={6} h={4} className="mr-[3px]"><path d="M0 3h6L3 0z" fill="#555" stroke="none" /></Icon>
        </div>
      </div>
    </div>
  );
}

function Viewport() {
  return (
    <main className="relative flex-1 overflow-hidden border-x-4 border-t-4 border-[#3b4453] bg-[#21272f]">
      <Drawing />
      <p className="absolute top-1 left-[3px] text-[#d5d8dc]">[−][Top][2D Wireframe]</p>
      <div className="absolute top-[8px] right-[11px] flex gap-[7px]">
        <button type="button" aria-label="Minimize view"><Icon w={9} h={9}><path d="M1 7.500h7" strokeWidth={2} stroke="#fff" /></Icon></button>
        <button type="button" aria-label="Restore view"><Icon w={9} h={9}><path d="M.7 3h5v5h-5zM3 1h5.300v5" strokeWidth={1.400} stroke="#fff" /></Icon></button>
        <button type="button" aria-label="Close view"><Icon w={8} h={9}><path d="M1 1.500l6 6M7 1.500l-6 6" strokeWidth={2} stroke="#fff" /></Icon></button>
      </div>
      <ViewCube />
      <NavBar />
      <DynamicInput />
      <CommandLine />
    </main>
  );
}

/* ---------- status bar ---------- */

function StatusButton({ label, icon, active = false }: { label: string; icon: ReactNode; active?: boolean }) {
  return (
    <button type="button" aria-label={label} className={`flex h-5 w-5 items-center justify-center ${active ? "border-x border-[#3b4453] bg-[#5a8ac6]" : ""}`}>
      <Icon>{icon}</Icon>
    </button>
  );
}

function StatusGroup({ children }: { children: ReactNode }) {
  return <div className="flex h-5 items-center bg-[#3b4453]">{children}</div>;
}

const StatusCaret = () => (
  <span className="flex w-3 justify-center">
    <Caret small />
  </span>
);

const Person = () => <path d="M8 2l2 5 4 7-4-2H6l-4 2 4-7z" fill="#e6e9ed" stroke="none" />;

function StatusBar() {
  return (
    <footer className="flex h-6 shrink-0 justify-between border-l-4 border-r-3 border-[#3b4453] bg-[#222933]">
      <div className="flex items-start pl-2 leading-[15px]">
        <button type="button" className="h-4 w-12 rounded-b-md bg-[#3b4453] font-bold text-white">Model</button>
        <button type="button" className="ml-0.5 h-4 w-[52px] rounded-b-md bg-[#2b323e] text-[#b3b9c2]">Layout1</button>
        <button type="button" className="ml-0.5 h-4 w-[52px] rounded-b-md bg-[#2b323e] text-[#b3b9c2]">Layout2</button>
        <button type="button" aria-label="New layout" className="ml-[6px] flex h-4 w-4 items-center justify-center rounded-b-md bg-[#2b323e]"><Icon w={7} h={7}><path d="M3.500 0v7M0 3.500h7" /></Icon></button>
      </div>
      <div className="flex items-center gap-0.5">
        <StatusGroup><span className="w-10 text-center font-semibold text-[#e6e9ed]">MODEL</span></StatusGroup>
        <StatusGroup>
          <StatusButton label="Grid" icon={<path d="M5.500 2v12M8.500 2v12M11.500 2v12M2 5.500h12M2 8.500h12M2 11.500h12" />} />
          <StatusButton label="Snap" icon={<path d="M3 3.500h11M3 8h11M3 12.500h11" strokeWidth={1.500} strokeDasharray="1.500 3" />} />
          <StatusCaret />
        </StatusGroup>
        <StatusGroup>
          <StatusButton label="Ortho" icon={<path d="M3.500 2v12H15M3.500 9.500h4.500V14" />} />
          <StatusButton label="Polar" active icon={<><path d="M13.500 8.500A5.500 5.500 0 1 1 11 3.500" /><path d="M14 2L8 8.500h7M12 5v6" /></>} />
          <StatusCaret />
          <StatusButton label="Isodraft" icon={<><path d="M3 2l10 12" stroke="#e06a6a" /><path d="M8 2v13" stroke="#5bc98a" /></>} />
          <StatusCaret />
        </StatusGroup>
        <StatusGroup>
          <StatusButton label="Object snap tracking" active icon={<path d="M14 3L3 12.500h12" />} />
          <StatusButton label="Object snap" active icon={<path d="M2.500 2.500h3v3h-3zM6 4.500h7.500v9h-9V6" />} />
          <StatusCaret />
        </StatusGroup>
        <StatusGroup>
          <StatusButton label="Annotation visibility" active icon={<><Person /><circle cx={12.500} cy={4.500} r={2} /></>} />
          <StatusButton label="Auto scale" icon={<><Person /><path d="M13 1l-2 4h3l-2 3" /></>} />
          <StatusButton label="Annotation scale" icon={<Person />} />
          <span className="pl-[3px] text-[#e6e9ed]">1:1</span>
          <StatusCaret />
        </StatusGroup>
        <StatusGroup>
          <StatusButton label="Workspace" icon={<><circle cx={8} cy={8} r={3.500} strokeWidth={3} /><path d="M8 2v3M8 11v3M2 8h3M11 8h3M4 4l2 2M10 10l2 2M12 4l-2 2M6 10l-2 2" strokeWidth={2} /></>} />
          <StatusCaret />
        </StatusGroup>
        <StatusGroup><StatusButton label="Monitor" icon={<path d="M8 2v12M2 8h12" strokeWidth={1.500} />} /></StatusGroup>
        <StatusGroup><StatusButton label="Isolate objects" icon={<><rect x={2.500} y={2.500} width={5} height={5} /><circle cx={12} cy={7.500} r={2.500} /><path d="M6.500 10l2.500 4H4z" /></>} /></StatusGroup>
        <StatusGroup><StatusButton label="Graphics performance" icon={<g stroke="none"><circle cx={9} cy={7} r={6} fill="#4d84c8" /><path d="M2 7h6v7H2z" fill={GOLD} /><path d="M2 7h6v3H2z" fill="#d8dce2" /><path d="M7 11l3 3 5-6-1.500-1-3.500 4-1.500-1.500z" fill="#4fbf5c" /></g>} /></StatusGroup>
        <StatusGroup>
          <StatusButton label="Clean screen" icon={<><rect x={1.500} y={3.500} width={12} height={9} /><path d="M8.500 6h3v2.500M6.500 10h-3V7.500" /></>} />
          <StatusButton label="Customization" icon={<path d="M2 3.500h12M2 8h12M2 12.500h12" strokeWidth={1.500} />} />
        </StatusGroup>
      </div>
    </footer>
  );
}

/* ---------- windows taskbar ---------- */

function TaskApp({ label, w = "w-[41px]", open = false, active = false, children }: { label: string; w?: string; open?: boolean; active?: boolean; children: ReactNode }) {
  return (
    <button type="button" aria-label={label} className={`${w} flex flex-col items-center ${active ? "bg-[#3a3f41]" : ""}`}>
      <span className="flex flex-1 items-center">{children}</span>
      <span className={`h-0.5 ${active ? "w-full" : "w-[33px]"} ${open ? "bg-[#76b2e6]" : ""}`} />
    </button>
  );
}

function Taskbar() {
  return (
    <div className="flex h-[34px] shrink-0 bg-[#060b10] text-[#f0f2f4]">
      <TaskApp w="w-10" label="Start"><Icon><path d="M1 3.500l6-1v5H1zM8 2.300L15 1v6.500H8zM1 8.500h6v5l-6-1zM8 8.500h7V15l-7-1.200z" fill="#fff" stroke="none" /></Icon></TaskApp>
      <TaskApp w="w-10" label="Search"><Icon><circle cx={9.500} cy={6} r={4.500} stroke="#fff" /><path d="M6 9.500L2 14" stroke="#fff" /></Icon></TaskApp>
      <TaskApp w="w-10" label="Task view"><Icon><path d="M1.500 5.500h9v6h-9zM1.500 1v2h9V1M1.500 15v-2h9v2M14 1v3M14 8v7" stroke="#fff" /><circle cx={14} cy={6} r={1} fill="#fff" /></Icon></TaskApp>
      <TaskApp label="File Explorer" open><Icon w={18} h={16}><path d="M0 0h7l2 2h9v13H0z" fill="#f3cf6b" stroke="none" /><path d="M0 4h18v11H0z" fill="#fbe39b" stroke="none" /><path d="M4 15V9h10v6h-3v-3H7v3z" fill="#3fa9e6" stroke="none" /></Icon></TaskApp>
      <TaskApp label="PredatorSense">
        <Icon w={20} h={20}><path d="M3 1C0 6 0 14 3 19M17 1c3 5 3 13 0 18" stroke="#1c5a66" strokeWidth={1.500} /><path d="M4 2l4 5v9l-4-3zM16 2l-4 5v9l4-3zM8.500 7h3v8L10 18l-1.500-3z" fill="#63676b" stroke="none" /></Icon>
      </TaskApp>
      <TaskApp label="Chrome" open>
        <Icon w={18} h={18}>
          <g stroke="none">
            <path d="M9 9L1.200 4.500A9 9 0 0 1 16.800 4.500z" fill="#e34133" />
            <path d="M9 9l7.800-4.500A9 9 0 0 1 9 18z" fill="#fbc116" />
            <path d="M9 9v9A9 9 0 0 1 1.200 4.500z" fill="#2da94f" />
            <circle cx={9} cy={9} r={4.300} fill="#fff" />
            <circle cx={9} cy={9} r={3.400} fill="#4a8af4" />
          </g>
        </Icon>
      </TaskApp>
      <TaskApp label="Photoshop"><span className="flex size-[18px] items-center justify-center border border-[#20a5d8] bg-[#0a2233] text-[10px] font-bold text-[#2fb6ec]">Ps</span></TaskApp>
      <TaskApp label="Steam">
        <Icon w={18} h={18}><circle cx={9} cy={9} r={9} fill="#1b4c86" stroke="none" /><path d="M0 9l6 3 5-5" stroke="#fff" strokeWidth={2} /><circle cx={12} cy={6.500} r={2.800} stroke="#fff" strokeWidth={1.500} /><circle cx={6.500} cy={12.500} r={2.200} fill="#fff" stroke="none" /></Icon>
      </TaskApp>
      <TaskApp label="Photos" open><Icon w={19} h={19}><path d="M0 0h19v19H0z" fill="#fff" stroke="none" /><path d="M1 18v-3l6-8 4 5 2-3 5 6v3z" fill="#0b0f13" stroke="none" /></Icon></TaskApp>
      <TaskApp label="AutoCAD" open active><Icon w={20} h={20}><path d="M0 0h20v20H0z" fill="#f3e4e2" stroke="none" /><path d="M7.500 3h5L17 17h-4l-1-3H8.500L7 17H3z" fill="#c4262b" stroke="none" /><path d="M10 7l1.500 4h-3z" fill="#f3e4e2" stroke="none" /></Icon></TaskApp>
      <div className="ml-auto flex items-center gap-1">
        <button type="button" aria-label="People" className="mr-[10px]"><Icon><g stroke="#fff"><circle cx={5.500} cy={7.500} r={2.200} /><path d="M2 14.500c0-3 1.500-4.500 3.500-4.500s3.500 1.500 3.500 4.500" /><circle cx={11} cy={4} r={2.200} /><path d="M9 7c3-1 5.500.5 5.500 4" /></g></Icon></button>
        <button type="button" aria-label="Show hidden icons"><Icon><path d="M3 10l5-5 5 5" stroke="#fff" /></Icon></button>
        <Icon><path d="M4 13a3 3 0 0 1-.5-6A4.500 4.500 0 0 1 12 6.500a3.300 3.300 0 0 1 0 6.500z" fill="#dfe2e5" stroke="none" /></Icon>
        <Icon><circle cx={7.500} cy={8} r={6} fill="#f7c31c" stroke="none" /><circle cx={7.500} cy={7.500} r={3} fill="#fff" stroke="none" /><circle cx={11.500} cy={11.500} r={3.800} fill="#2fa34a" stroke="none" /><path d="M9.500 11.500l1.500 1.500 2.500-3" stroke="#fff" /></Icon>
        <Icon><path d="M5.500 5.500h9v6h-9z" stroke="#fff" /><path d="M7 7h6v3H7z" fill="#fff" stroke="none" /><path d="M1 3.500h4v3H1zM3 7v4.500h2" stroke="#fff" /></Icon>
        <Icon><path d="M2 13A11 11 0 0 1 13 3M5 13.500A8 8 0 0 1 13 6M8 14a5 5 0 0 1 5-5" stroke="#d3d6d9" /><circle cx={12} cy={13} r={1.200} fill="#fff" stroke="none" /></Icon>
        <Icon><path d="M2 6h2.500l3-3v10l-3-3H2zM9.500 6c1 1 1 3 0 4M11.500 4.500c2 2 2 5 0 7M13.500 3c2.500 3 2.500 7 0 10" stroke="#fff" /></Icon>
        <div className="ml-[3px] w-5 text-center leading-[14px]">ENG<br />ROS</div>
        <div className="mx-1 w-12 text-center leading-[14px]">5:57 PM<br />3/19/2020</div>
        <button type="button" aria-label="Notifications" className="mr-5 ml-[3px]"><Icon><path d="M2.500 2.500h12v9h-4l-2 2.500-2-2.500h-4z" stroke="#fff" /></Icon></button>
      </div>
    </div>
  );
}

function Notification() {
  return (
    <div className="absolute top-[31px] right-[116px] h-14 w-[208px] rounded-[4px] bg-linear-to-b from-[#dededf]/92 to-[#b9babd]/88 text-black">
      <Icon w={20} h={10} className="absolute -top-[9px] right-[10px]"><path d="M0 10L10 0l10 10z" fill="#d2d3d4" stroke="none" /></Icon>
      <div className="flex pt-[9px] pl-2">
        <Icon w={14} h={21}><circle cx={7} cy={7} r={5.500} fill="#e4dfae" stroke="#8d8a70" /><path d="M4.500 11.500h5v4h-5z" fill="#ddd8a5" stroke="#8d8a70" /><path d="M5 17h4v2H5z" fill="#444" stroke="none" /></Icon>
        <div className="ml-2 leading-[13px] whitespace-nowrap">
          <p className="font-bold">Autodesk App Manager 2020 has</p>
          <p className="font-bold">been successfully loaded.</p>
          <a href="#hide" className="text-[#1a1ac8] underline">Don&apos;t show me this again</a>
        </div>
      </div>
      <button type="button" aria-label="Dismiss" className="absolute top-1 right-[6px]"><Icon w={10} h={10}><circle cx={5} cy={5} r={5} fill="#55575a" stroke="none" /><path d="M3 3l4 4M7 3L3 7" stroke="#d0d0d0" /></Icon></button>
      <Icon w={10} h={7} className="absolute right-[10px] bottom-2"><path d="M0 0h10L5 7z" fill="#3b3b3d" stroke="none" /></Icon>
    </div>
  );
}

export default function App() {
  return (
    <div className="relative flex h-screen flex-col bg-[#04161e] font-['Open_Sans',sans-serif] text-[10px] text-[#dde0e5]">
      <div className="flex h-0.5 shrink-0">
        <span className="ml-[130px] w-[195px] bg-[#0f6e92]" />
        <span className="ml-[264px] w-[67px] bg-[#0f6e92]" />
        <span className="w-[26px] bg-[#1b9be0]" />
        <span className="w-60 bg-[#0f6e92]" />
      </div>
      <div className="mr-1 ml-0.5 flex min-h-0 flex-1 flex-col border-b-[3px] border-[#3b4453] bg-[#222933]">
        <Header />
        <Ribbon />
        <div className="flex h-[22px] shrink-0 items-end pl-[22px]">
          <button type="button" className="h-[18px] w-[100px] rounded-t-lg bg-[#2c3440] pl-[7px] text-left text-[#b3b9c2]">Start</button>
          <div className="ml-0.5 flex h-[18px] w-[106px] shrink-0 items-center justify-between rounded-t-lg bg-[#3b4453] px-2">
            <button type="button" className="whitespace-nowrap">GRID 19.03.2020*</button>
            <button type="button" aria-label="Close drawing"><Icon w={8} h={8}><path d="M1 1l6 6M7 1L1 7" strokeWidth={1.500} /></Icon></button>
          </div>
          <button type="button" aria-label="New drawing" className="mb-[3px] ml-[7px] flex h-3 w-4 items-center justify-center rounded-sm bg-[#2c3440]"><Icon w={7} h={7}><path d="M3.500 0v7M0 3.500h7" strokeWidth={1.500} /></Icon></button>
        </div>
        <Viewport />
        <StatusBar />
      </div>
      <Taskbar />
      <Notification />
    </div>
  );
}
